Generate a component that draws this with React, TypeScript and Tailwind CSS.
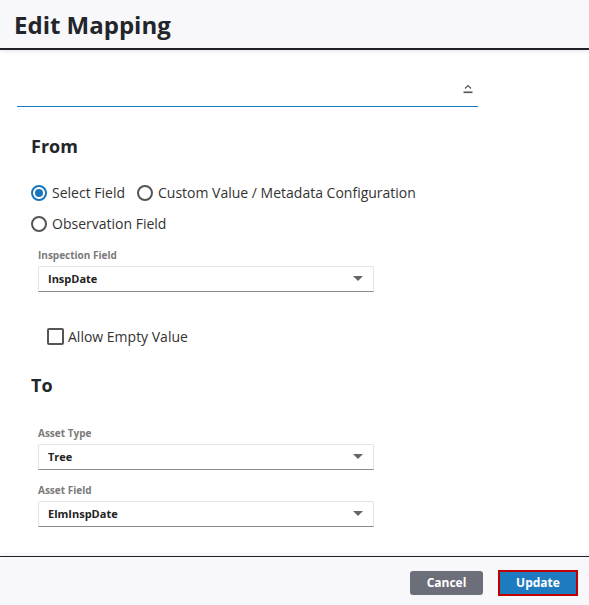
import React from "react";

const font = { fontFamily: '"Open Sans", "Noto Sans", sans-serif' };

function Caret() {
  return (
    <svg width="10" height="6" viewBox="0 0 10 6" className="shrink-0">
      <path d="M0 0 L10 0 L5 5 Z" fill="#666" />
    </svg>
  );
}

function SelectBox({ label, value }: { label: string; value: string }) {
  return (
    <div className="flex flex-col">
      <div className="text-[10px] font-bold text-[#7a7a7a] leading-[14px] mb-[4px]">{label}</div>
      <div className="w-[336px] h-[26px] border border-[#e3e3e3] border-b-[#8a8a8a] rounded-t-[2px] flex items-center justify-between pl-[9px] pr-[10px] bg-white">
        <span className="text-[11px] font-bold text-[#222]">{value}</span>
        <Caret />
      </div>
    </div>
  );
}

function Radio({ checked, label }: { checked?: boolean; label: string }) {
  return (
    <label className="flex items-center gap-[5px]">
      {checked ? (
        <span className="w-[16px] h-[16px] rounded-full border-2 border-[#1b75bb] flex items-center justify-center">
          <span className="w-[8px] h-[8px] rounded-full bg-[#1b75bb]" />
        </span>
      ) : (
        <span className="w-[16px] h-[16px] rounded-full border-2 border-[#555]" />
      )}
      <span className="text-[14px] text-[#333]">{label}</span>
    </label>
  );
}

export default function App() {
  return (
    <div className="w-[589px] h-[605px] bg-white flex flex-col overflow-hidden" style={font}>
      <div className="h-[50px] shrink-0 bg-[#f8f8fa] border-b-[2px] border-[#1f2328] flex items-center px-[14px] shadow-[0_2px_4px_rgba(0,0,0,0.08)] relative z-10">
        <h1 className="text-[24px] font-bold text-[#22262b] leading-none mt-[2px]">Edit Mapping</h1>
      </div>
      <div className="flex-1 flex flex-col">
        <div className="ml-[17px] mt-[30px] w-[461px] h-[27px] border-b-[1.5px] border-[#1a7bc4] flex items-start justify-end pr-[4px]">
          <svg width="12" height="10" viewBox="0 0 12 10" className="mt-[4px]">
            <path d="M3 4.5 L6 1.5 L9 4.5" stroke="#555" strokeWidth="1.2" fill="none" />
            <rect x="1.5" y="7.5" width="9" height="1.6" fill="#555" />
          </svg>
        </div>
        <div className="pl-[31px] mt-[27px] text-[18px] font-bold text-[#22262b] leading-[24px]">From</div>
        <div className="pl-[31px] mt-[24px] flex gap-[12px]">
          <Radio checked label="Select Field" />
          <Radio label="Custom Value / Metadata Configuration" />
        </div>
        <div className="pl-[31px] mt-[10px] flex">
          <Radio label="Observation Field" />
        </div>
        <div className="pl-[38px] mt-[14px]">
          <SelectBox label="Inspection Field" value="InspDate" />
        </div>
        <div className="pl-[47px] mt-[34px] flex items-center gap-[4px]">
          <span className="w-[17px] h-[17px] border-2 border-[#555] rounded-[2px]" />
          <span className="text-[14px] text-[#333]">Allow Empty Value</span>
        </div>
        <div className="pl-[31px] mt-[26px] text-[18px] font-bold text-[#22262b] leading-[24px]">To</div>
        <div className="pl-[38px] mt-[29px] flex flex-col gap-[13px]">
          <SelectBox label="Asset Type" value="Tree" />
          <SelectBox label="Asset Field" value="ElmInspDate" />
        </div>
      </div>
      <div className="h-[49px] shrink-0 bg-[#f8f8fa] border-t-[1.5px] border-[#1f2328] flex items-center justify-end gap-[15px] pr-[11px] pt-[3px] shadow-[0_-2px_4px_rgba(0,0,0,0.06)]">
        <button className="w-[73px] h-[24px] rounded-[3px] bg-[#6c6e7a] text-white text-[12px] font-bold">Cancel</button>
        <button className="w-[80px] h-[26px] bg-[#1f7bbf] border-2 border-[#c00000] text-white text-[12px] font-bold">Update</button>
      </div>
    </div>
  );
}
